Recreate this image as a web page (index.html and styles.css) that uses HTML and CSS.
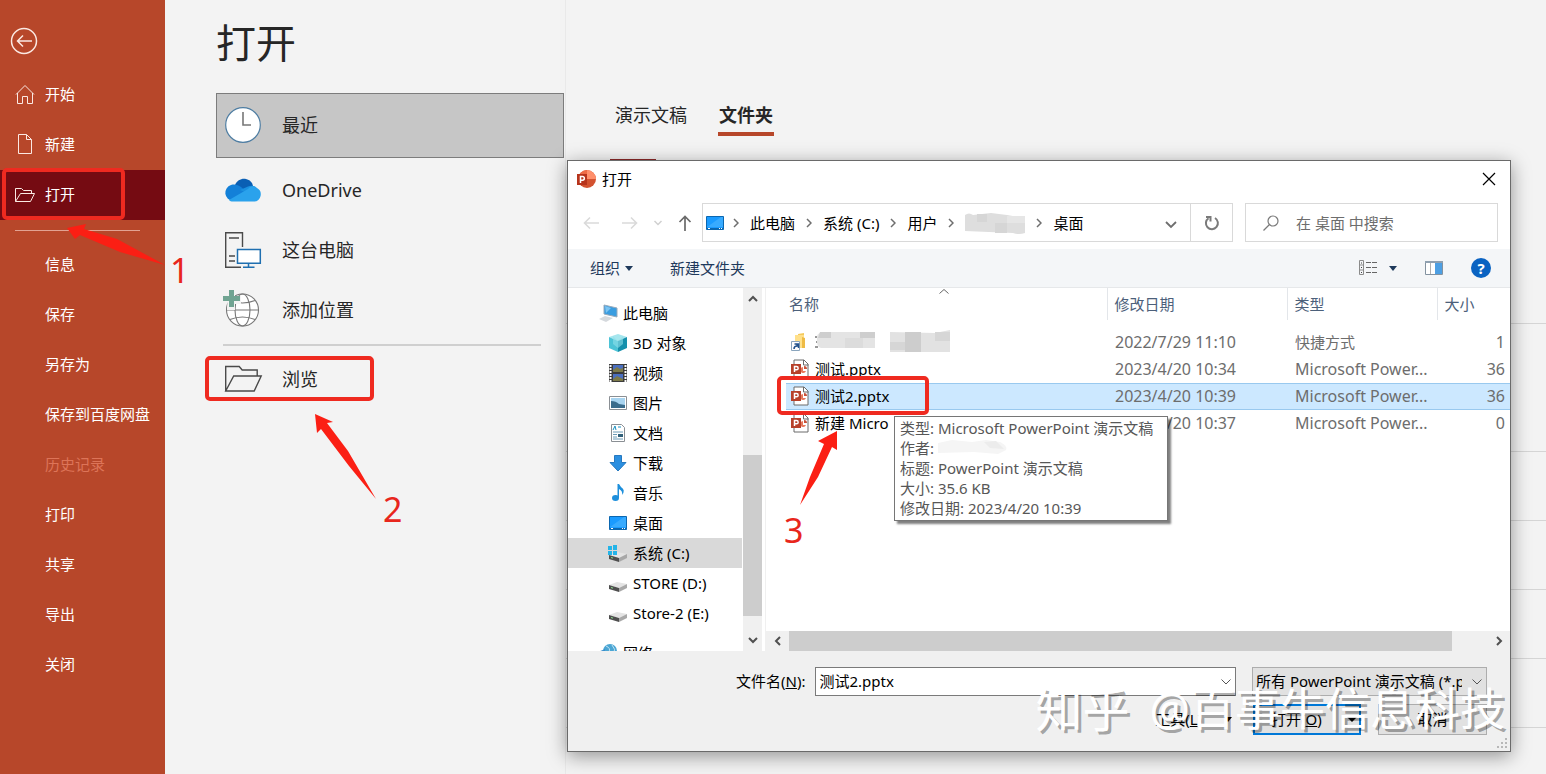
FILE: index.html
```
<!DOCTYPE html>
<html lang="zh-CN">

<head>
    <meta charset="utf-8" />
    <title>打开</title>
    <meta name="viewport" content="width=device-width, initial-scale=1" />
    <link rel="stylesheet" href="styles.css">
</head>

<body>
    <!-- shared icons -->
    <svg class="defs" width="0" height="0">
        <symbol id="ppt-file" viewBox="0 0 20 20">
            <path d="M4 1h10l4 4v14H4z" fill="#fff" stroke="#6b6b6b" />
            <path d="M13.500 1v5h5" fill="none" stroke="#6b6b6b" />
            <path d="M13 8a3 3 0 1 0 3 4h-3z" fill="#e8795c" />
            <path d="M14 7a3 3 0 0 1 3 3h-3z" fill="#c9523a" />
            <path d="M1 5h10v10H1z" fill="#b7412a" />
            <path d="M4.500 13V7.500h2a1.600 1.600 0 0 1 0 3.300h-2" fill="none" stroke="#fff" stroke-width="1.500" />
        </symbol>
        <symbol id="drive" viewBox="0 0 20 20">
            <path d="M1 12l8-3 10 2-8 4z" fill="#e4e4e4" />
            <path d="M1 12l10 3v4L1 16z" fill="#4e4e4e" />
            <path d="M11 15l8-4v4l-8 4z" fill="#a8a8a8" />
            <path d="M3 14.500l2 .6" stroke="#8de08d" />
        </symbol>
        <symbol id="screen" viewBox="0 0 20 20">
            <path d="M1.500 3.500h17v13h-17z" fill="#1a9bff" stroke="#0b67b0" />
            <path d="M2 14L16 4h2v10z" fill="#38abff" />
            <path d="M2 15.500h16" stroke="#0b67b0" />
            <path d="M3 15.500h2m9 0h1m1 0h1" stroke="#fff" />
        </symbol>
        <symbol id="chevron" viewBox="0 0 6 10">
            <path d="M1 1l4 4-4 4" fill="none" stroke="#6e6e6e" stroke-width="1.500" />
        </symbol>
    </svg>

    <nav class="sidebar">
        <button class="back" aria-label="返回">
            <svg width="28" height="28" viewBox="0 0 28 28" fill="none" stroke="#fbe9e3" stroke-width="1.500">
                <circle cx="14" cy="14" r="12.500" />
                <path d="M22 14H7.500M13 8.500L7.500 14l5.500 5.500" />
            </svg>
        </button>
        <a href="#" class="nav-item">
            <svg width="20" height="20" viewBox="0 0 20 20" fill="none" stroke="#fbe9e3">
                <path d="M1 10.500L10 1.500l9 9M2.500 9v10.500h5v-7h5v7h5V9" />
            </svg>
            开始
        </a>
        <a href="#" class="nav-item">
            <svg width="20" height="20" viewBox="0 0 20 20" fill="none" stroke="#fbe9e3">
                <path d="M3.500.5h8l5 5v14h-13zM11.500.5v5h5" />
            </svg>
            新建
        </a>
        <a href="#" class="nav-item active">
            <svg width="20" height="20" viewBox="0 0 20 20" fill="none" stroke="#fbe9e3">
                <path d="M.5 17.500v-13h6l2 2h8v3M.5 17.500l5-8h14l-4 8z" />
            </svg>
            打开
        </a>
        <hr class="nav-line">
        <a href="#" class="nav-item text">信息</a>
        <a href="#" class="nav-item text">保存</a>
        <a href="#" class="nav-item text">另存为</a>
        <a href="#" class="nav-item text">保存到百度网盘</a>
        <a href="#" class="nav-item text disabled">历史记录</a>
        <a href="#" class="nav-item text">打印</a>
        <a href="#" class="nav-item text">共享</a>
        <a href="#" class="nav-item text">导出</a>
        <a href="#" class="nav-item text">关闭</a>
    </nav>

    <main class="main">
        <section class="places">
            <h1>打开</h1>
            <button class="place selected">
                <svg width="36" height="36" viewBox="0 0 36 36">
                    <circle cx="18" cy="18" r="17.300" fill="#fff" stroke="#4f7ea3" stroke-width="1.200" />
                    <path d="M18 5v13h8" fill="none" stroke="#777" stroke-width="1.600" />
                </svg>
                最近
            </button>
            <button class="place">
                <svg width="36" height="36" viewBox="0 0 36 36">
                    <path d="M10 13C12 8 17 6 21 7c4 1 6 3 7 7l-9 6z" fill="#0a5fb4" />
                    <path d="M8 29a8.200 8.200 0 0 1-2-16c4-1 7 0 10 2l11 9-9 5z" fill="#1380d8" />
                    <path d="M15 18l8-3.500c2-1 5-1 7 0l-2 9z" fill="#1a90e0" />
                    <path d="M4 28L23 17c2-3 6-4 9-1a7.200 7.200 0 0 1-3 13.500H8c-2 0-3-.5-4-1.500z" fill="#2aa2ec" />
                </svg>
                OneDrive
            </button>
            <button class="place">
                <svg width="36" height="36" viewBox="0 0 36 36" fill="none">
                    <path d="M17.500 15V.7H.7v34.600H16M4 6h10M4 24h6M4 29h6" stroke="#4a4a4a" stroke-width="1.400" />
                    <path d="M12.500 17.500h22.800v13.800H12.500z" fill="#fff" stroke="#1f6fb0" stroke-width="1.500" />
                    <path d="M23.500 31.500v4M18 35.300h11.500" stroke="#1f6fb0" stroke-width="1.500" />
                </svg>
                这台电脑
            </button>
            <button class="place">
                <svg width="36" height="36" viewBox="0 0 36 36" fill="none">
                    <g stroke="#777" stroke-width="1.100">
                        <circle cx="17.500" cy="18" r="16" fill="#fff" />
                        <ellipse cx="17.500" cy="18" rx="7.500" ry="16" />
                        <path d="M1.500 18h32M5 8.500q12.500 5 25 0M5 27.500q12.500-5 25 0" />
                    </g>
                    <path d="M3-1h7v5h6v8h-6v6H2z" fill="#f3f3f3" />
                    <path d="M4-2h5v6h6v5H9v6H4V9h-6V4h6z" fill="#70a492" />
                </svg>
                添加位置
            </button>
            <hr class="place-line">
            <button class="place">
                <svg width="36" height="36" viewBox="0 0 36 36" fill="none" stroke="#4a4a4a" stroke-width="1.400">
                    <path d="M.7 30V5.500h13.500l3 3.500h15v6M.7 30l8-15h27.500l-7 15z" />
                </svg>
                浏览
            </button>
        </section>

        <section class="recent">
            <div class="tabs">
                <a href="#" class="tab">演示文稿</a>
                <a href="#" class="tab current">文件夹</a>
            </div>
            <ul class="folders">
                <li class="first"></li>
                <li class="group"></li>
                <li></li>
                <li></li>
                <li></li>
                <li></li>
            </ul>
        </section>
    </main>

    <div class="dialog" role="dialog" aria-label="打开">
        <header class="title-bar">
            <svg width="20" height="20" viewBox="0 0 20 20">
                <circle cx="11" cy="10" r="9" fill="#d35230" />
                <path d="M11 1a9 9 0 0 1 9 9h-9z" fill="#ff8f6b" />
                <path d="M11 1a9 9 0 0 0-9 9h9z" fill="#ed6c47" />
                <path d="M1 5h10v11H1z" fill="#b7341c" />
                <path d="M4.500 14V7.500h2a1.800 1.800 0 0 1 0 3.700h-2" fill="none" stroke="#fff" stroke-width="1.500" />
            </svg>
            <span>打开</span>
            <button class="close" aria-label="关闭">
                <svg width="12" height="12" viewBox="0 0 12 12">
                    <path d="M0 0l12 12M12 0L0 12" stroke="#000" stroke-width="1.200" />
                </svg>
            </button>
        </header>

        <div class="nav-bar">
            <div class="history">
                <button class="prev" aria-label="后退">
                    <svg width="16" height="14" viewBox="0 0 16 14" fill="none" stroke="#dadada" stroke-width="1.600">
                        <path d="M16 7H1.500M7 1.500L1.500 7 7 12.500" />
                    </svg>
                </button>
                <button aria-label="前进">
                    <svg width="16" height="14" viewBox="0 0 16 14" fill="none" stroke="#dadada" stroke-width="1.600">
                        <path d="M0 7h14.500M9 1.500L14.500 7 9 12.500" />
                    </svg>
                </button>
                <button aria-label="最近位置">
                    <svg width="8" height="6" viewBox="0 0 8 6" fill="none" stroke="#d0d0d0" stroke-width="1.500">
                        <path d="M.5 1L4 4.500 7.500 1" />
                    </svg>
                </button>
                <button aria-label="上移">
                    <svg width="14" height="16" viewBox="0 0 14 16" fill="none" stroke="#6a6a6a" stroke-width="1.700">
                        <path d="M7 16V1.500M1.500 7L7 1.500 12.500 7" />
                    </svg>
                </button>
            </div>
            <div class="address">
                <svg class="address-icon" width="20" height="20">
                    <use href="#screen" />
                </svg>
                <svg width="6" height="10"><use href="#chevron" /></svg>
                <a href="#">此电脑</a>
                <svg width="6" height="10"><use href="#chevron" /></svg>
                <a href="#">系统 (C:)</a>
                <svg width="6" height="10"><use href="#chevron" /></svg>
                <a href="#">用户</a>
                <svg width="6" height="10"><use href="#chevron" /></svg>
                <svg width="60" height="22" viewBox="0 0 60 22">
                    <path d="M0 3q4-3 8 0l18-2 16 2q10 2 18 1v17q-6 2-12 0L0 19z" fill="#dedede" />
                    <path d="M12 2h10v8H12zM30 11h12v10H30z" fill="#d6d6d6" />
                    <path d="M42 4h18v7H42z" fill="#e6e6e6" />
                </svg>
                <svg width="6" height="10"><use href="#chevron" /></svg>
                <a href="#">桌面</a>
                <button class="expand" aria-label="历史">
                    <svg width="12" height="8" viewBox="0 0 12 8" fill="none" stroke="#6e6e6e" stroke-width="1.800">
                        <path d="M1 1l5 5 5-5" />
                    </svg>
                </button>
                <button class="refresh" aria-label="刷新">
                    <svg width="16" height="16" viewBox="0 0 16 16" fill="none" stroke="#7a7a7a" stroke-width="2">
                        <path d="M11 3A6 6 0 1 1 4.500 3.200M2 2h4.500v4.500" />
                    </svg>
                </button>
            </div>
            <label class="search">
                <svg width="16" height="16" viewBox="0 0 16 16" fill="none" stroke="#7a7a7a" stroke-width="1.200">
                    <circle cx="10" cy="6" r="5" />
                    <path d="M6.500 9.500L.5 15.500" />
                </svg>
                <input type="text" placeholder="在 桌面 中搜索" aria-label="搜索">
            </label>
        </div>

        <div class="toolbar">
            <button>组织 <i class="caret"></i></button>
            <button>新建文件夹</button>
            <div class="tools">
                <button aria-label="更改视图">
                    <svg width="20" height="16" viewBox="0 0 20 16" fill="none">
                        <path d="M1.500.5h4v14h-4zM1.500 5h4M1.500 10h4" stroke="#8b8b8b" />
                        <path d="M3 3h1M3 7.500h1M3 12.500h1" stroke="#444" />
                        <path d="M8 2.500h5m1 0h5M8 7.500h5m1 0h5M8 12.500h5m1 0h5" stroke="#666" />
                    </svg>
                    <i class="caret"></i>
                </button>
                <button aria-label="预览窗格">
                    <svg width="20" height="16" viewBox="0 0 20 16">
                        <path d="M1.500 1.500h17v13h-17z" fill="#fff" stroke="#8392a0" />
                        <path d="M1 1h18v2H1z" fill="#8fa0b0" />
                        <path d="M6.500 3v11" stroke="#b0b0b0" />
                        <path d="M11 3h7v11h-7z" fill="#4d9fe3" />
                    </svg>
                </button>
                <button class="help" aria-label="帮助">?</button>
            </div>
        </div>

        <div class="body">
            <ul class="tree">
                <li class="root">
                    <svg width="20" height="20" viewBox="0 0 20 20">
                        <path d="M6 2l13 3v9L6 11z" fill="#3a9de0" stroke="#9ab" />
                        <path d="M7 3l6 2-5 5z" fill="#7cc4f2" />
                        <path d="M1 16l6-3 8 2-7 4z" fill="#d5d9dd" />
                    </svg>
                    此电脑
                </li>
                <li>
                    <svg width="20" height="20" viewBox="0 0 20 20">
                        <path d="M10 1l9 3-9 4-9-4z" fill="#a6e6ee" />
                        <path d="M1 4l9 4v11l-9-4z" fill="#4cc3d6" />
                        <path d="M19 4l-9 4v11l9-4z" fill="#1590ac" />
                        <path d="M5 3l5 5 5-5v8l-5 4-5-4z" fill="#8fe0ea" opacity=".6" />
                    </svg>
                    3D 对象
                </li>
                <li>
                    <svg width="20" height="20" viewBox="0 0 20 20">
                        <path d="M1 1h18v18H1z" fill="#3c3c3c" />
                        <path d="M2.500 2v17M17.500 2v17" stroke="#fff" stroke-width="2" stroke-dasharray="2 1" />
                        <path d="M5 2h10v7H5zM5 11h10v7H5z" fill="#4a6fc0" />
                        <path d="M5 7l4-3 3 2 3-1v4H5zM5 16l4-3 6 3v2H5z" fill="#7c7a4a" />
                    </svg>
                    视频
                </li>
                <li>
                    <svg width="20" height="20" viewBox="0 0 20 20">
                        <path d="M1.500 3.500h17v13h-17z" fill="#fff" stroke="#8a8f94" />
                        <path d="M3 5h14v10H3z" fill="#a8d4f0" />
                        <path d="M3 8q5 0 8 3l6 1v3H3z" fill="#3a6c8c" />
                    </svg>
                    图片
                </li>
                <li>
                    <svg width="20" height="20" viewBox="0 0 20 20">
                        <path d="M3.500 1.500h10l3 3v14h-13z" fill="#fff" stroke="#8a8f94" />
                        <path d="M5 7l2-4 1 4M10 4h3" fill="none" stroke="#1a8fc0" />
                        <path d="M5 9h10M5 11.500h4M5 14h4M5 16h10" stroke="#6c9cb8" />
                        <path d="M10 11h5v3h-5z" fill="#30607a" />
                    </svg>
                    文档
                </li>
                <li>
                    <svg width="20" height="20" viewBox="0 0 20 20">
                        <path d="M6.500 2.500h7v7h4.500l-8 8.500-8-8.500h4.500z" fill="#2b8fe0" stroke="#2679c0" />
                    </svg>
                    下载
                </li>
                <li>
                    <svg width="20" height="20" viewBox="0 0 20 20">
                        <ellipse cx="7.500" cy="15" rx="3.500" ry="3" fill="#1d8fdc" />
                        <path d="M9.500 1v14h1.500V6q4 2 3 6 4-5-1-8l-2-3z" fill="#1d8fdc" />
                    </svg>
                    音乐
                </li>
                <li>
                    <svg width="20" height="20"><use href="#screen" /></svg>
                    桌面
                </li>
                <li class="selected">
                    <svg width="20" height="20" viewBox="0 0 20 20">
                        <use href="#drive" />
                        <path d="M0 3h4v4H0zM5 2h4v5H5zM0 8h4v4H0zM5 8h4v4H5z" fill="#24b4e8" />
                    </svg>
                    系统 (C:)
                </li>
                <li>
                    <svg width="20" height="20"><use href="#drive" /></svg>
                    STORE (D:)
                </li>
                <li>
                    <svg width="20" height="20"><use href="#drive" /></svg>
                    Store-2 (E:)
                </li>
                <li class="root network">
                    <svg width="20" height="20" viewBox="0 0 20 20">
                        <circle cx="12" cy="8" r="7" fill="#4ba6d4" />
                        <path d="M8 3q5 2 3 6M14 2q4 4 2 9" fill="none" stroke="#bfe2f2" />
                        <path d="M0 9l7-3v8H0z" fill="#3a8fcc" />
                    </svg>
                    网络
                </li>
            </ul>
            <div class="v-scroll">
                <svg width="10" height="7" viewBox="0 0 10 7" fill="none" stroke="#505050" stroke-width="2">
                    <path d="M1 6l4-4 4 4" />
                </svg>
                <div class="v-track">
                    <div class="v-thumb"></div>
                </div>
                <svg width="10" height="7" viewBox="0 0 10 7" fill="none" stroke="#505050" stroke-width="2">
                    <path d="M1 1l4 4 4-4" />
                </svg>
            </div>
            <div class="files">
                <table>
                    <colgroup>
                        <col class="col-name">
                        <col class="col-date">
                        <col class="col-type">
                        <col class="col-size">
                    </colgroup>
                    <thead>
                        <tr>
                            <th>名称
                                <svg class="sort" width="10" height="5" viewBox="0 0 10 5" fill="none" stroke="#666">
                                    <path d="M.5 4.500L5 .5l4.500 4" />
                                </svg>
                            </th>
                            <th>修改日期</th>
                            <th>类型</th>
                            <th>大小</th>
                        </tr>
                    </thead>
                    <tbody>
                        <tr>
                            <td>
                                <div class="file">
                                    <svg width="20" height="20" viewBox="0 0 20 20">
                                        <path d="M8 2l6-1v15H8z" fill="#f5ca5c" />
                                        <path d="M5 3h9v13H5z" fill="#ffe08a" />
                                        <path d="M12 5l3 1v10h-3z" fill="#eebb45" />
                                        <path d="M1.500 9.500h8v9h-8z" fill="#fff" stroke="#8aa5bd" />
                                        <path d="M4 17q0-3 3-3v-2H4.500 8.500v4" fill="none" stroke="#24538c" stroke-width="1.500" />
                                    </svg>
                                    <svg width="136" height="22" viewBox="0 0 136 22">
                                        <path d="M0 6h2M1 11h2M0 16h3" stroke="#333" />
                                        <path d="M2 5q2-4 6-4h52v16H6q-4-1-4-6z" fill="#e4e4e4" />
                                        <path d="M5 1h11v6H3zM45 1h15v6H45z" fill="#cecece" />
                                        <path d="M30 7h18v10H30z" fill="#dcdcdc" />
                                        <path d="M75 1l45 1 15-3v22H75z" fill="#e2e2e2" />
                                        <path d="M90 1h16v10H90zM90 11h16v10H90z" fill="#cdcdcd" />
                                        <path d="M75 11h15v8H75zM120 1h15v9h-15z" fill="#d6d6d6" />
                                    </svg>
                                </div>
                            </td>
                            <td class="latin">2022/7/29 11:10</td>
                            <td>快捷方式</td>
                            <td class="latin">1</td>
                        </tr>
                        <tr>
                            <td>
                                <div class="file"><svg width="20" height="20"><use href="#ppt-file" /></svg>测试.pptx</div>
                            </td>
                            <td class="latin">2023/4/20 10:34</td>
                            <td class="latin">Microsoft Power...</td>
                            <td class="latin">36</td>
                        </tr>
                        <tr class="selected">
                            <td>
                                <div class="file"><svg width="20" height="20"><use href="#ppt-file" /></svg>测试2.pptx</div>
                            </td>
                            <td class="latin">2023/4/20 10:39</td>
                            <td class="latin">Microsoft Power...</td>
                            <td class="latin">36</td>
                        </tr>
                        <tr>
                            <td>
                                <div class="file"><svg width="20" height="20"><use href="#ppt-file" /></svg>新建 Micro</div>
                            </td>
                            <td class="latin">2023/4/20 10:37</td>
                            <td class="latin">Microsoft Power...</td>
                            <td class="latin">0</td>
                        </tr>
                    </tbody>
                </table>
                <div class="h-scroll">
                    <svg width="7" height="10" viewBox="0 0 7 10" fill="none" stroke="#505050" stroke-width="2">
                        <path d="M6 1L2 5l4 4" />
                    </svg>
                    <div class="h-track">
                        <div class="h-thumb"></div>
                    </div>
                    <svg width="7" height="10" viewBox="0 0 7 10" fill="none" stroke="#505050" stroke-width="2">
                        <path d="M1 1l4 4-4 4" />
                    </svg>
                </div>
            </div>
        </div>

        <footer class="footer">
            <div class="footer-row">
                <label for="filename">文件名(<u>N</u>):</label>
                <div class="combo">
                    <input type="text" id="filename" value="测试2.pptx">
                    <svg width="10" height="6" viewBox="0 0 10 6" fill="none" stroke="#555">
                        <path d="M.5.5L5 5 9.500.5" />
                    </svg>
                </div>
                <div class="combo filter">
                    <select aria-label="文件类型">
                        <option>所有 PowerPoint 演示文稿 (*.pptx)</option>
                    </select>
                    <svg width="10" height="6" viewBox="0 0 10 6" fill="none" stroke="#555">
                        <path d="M.5.5L5 5 9.500.5" />
                    </svg>
                </div>
            </div>
            <div class="footer-row actions">
                <button class="tool-menu">工具(<u>L</u>) <i class="caret"></i></button>
                <button class="open">
                    <span>打开(<u>O</u>)</span>
                    <i class="caret"></i>
                </button>
                <button class="cancel">取消</button>
            </div>
            <svg class="grip" width="12" height="12" viewBox="0 0 12 12" fill="#b8b8b8">
                <path d="M9 0h2v2H9zM9 4h2v2H9zM5 4h2v2H5zM9 8h2v2H9zM5 8h2v2H5zM1 8h2v2H1z" />
            </svg>
        </footer>

        <div class="tooltip" role="tooltip">
            <div>类型: Microsoft PowerPoint 演示文稿</div>
            <div>作者:
                <svg width="70" height="14" viewBox="0 0 70 14">
                    <path d="M0 3l14-3 20 2 14-2 14 2q8 4 6 8l-8 4-24-2-36 1z" fill="#f5f5f5" />
                    <path d="M46 2l12-1 8 8-14-1z" fill="#ececec" />
                </svg>
            </div>
            <div>标题: PowerPoint 演示文稿</div>
            <div>大小: 35.6 KB</div>
            <div>修改日期: 2023/4/20 10:39</div>
        </div>
    </div>

    <!-- step marks drawn over the windows -->
    <div class="mark mark-open"></div>
    <div class="mark mark-browse"></div>
    <div class="mark mark-file"></div>
    <svg class="arrows" width="900" height="540" viewBox="0 0 900 540" fill="#fb1f14">
        <path d="M67 228l19-4-2 5 33 10 48 26-45-13-40-17-5 4z" />
        <path d="M315 414l18 8-6 1 21 28 28 48-27-33-28-37-4 4z" />
        <path d="M837 431l0 19-5-3-14 30-18 28 10-28 14-33-6-3z" />
    </svg>
    <span class="step step-1">1</span>
    <span class="step step-2">2</span>
    <span class="step step-3">3</span>
    <div class="watermark">
        <span class="site">知乎</span>
        <span>@百事牛信息科技</span>
    </div>
</body>

</html>
```
FILE: styles.css
```
* {
    box-sizing: border-box;
}

body {
    position: relative;
    display: flex;
    min-height: 100vh;
    margin: 0;
    overflow: hidden;
    background: #f3f3f3;
    color: #262626;
    font-family: "Noto Sans", "Noto Sans CJK SC", sans-serif;
    font-size: 15px;
    line-height: 20px;
}

button {
    padding: 0;
    border: 0;
    background: none;
    color: inherit;
    font: inherit;
}

a {
    color: inherit;
    text-decoration: none;
}

ul {
    margin: 0;
    padding: 0;
    list-style: none;
}

svg {
    flex: none;
    overflow: visible;
}

.defs {
    position: absolute;
}

.caret {
    display: inline-block;
    border: 4px solid transparent;
    border-top: 5px solid #1e395b;
    border-bottom: 0;
}

/* Sidebar */
.sidebar {
    flex: none;
    width: 165px;
    padding-top: 27px;
    background: #b7472a;
    color: #fff;
}

.back {
    display: block;
    height: 28px;
    margin: 0 0 15px 10px;
}

.nav-item {
    display: flex;
    align-items: center;
    gap: 10px;
    height: 50px;
    padding: 0 0 2px 15px;
}

.nav-item.text {
    padding-left: 45px;
}

.nav-item.active {
    background: #750b12;
}

.nav-item.disabled {
    color: #dd7458;
}

.nav-line {
    height: 1px;
    margin: 10px 25px 9px 15px;
    border: 0;
    background: #e2a292;
}

/* Open page */
.main {
    display: flex;
    flex: 1;
}

.places {
    flex: none;
    width: 401px;
    padding: 15px 1px 0 51px;
    border-right: 1px solid #e9e9e9;
}

.places h1 {
    margin: 0 0 22px;
    font-size: 40px;
    font-weight: normal;
    line-height: 56px;
}

.place {
    display: flex;
    align-items: center;
    gap: 21px;
    width: 100%;
    height: 60px;
    padding-left: 9px;
    font-size: 18px;
}

.place.selected {
    height: 65px;
    margin-bottom: 2px;
    padding: 0 0 2px 8px;
    border: 1px solid #7c7c7c;
    background: #c6c6c6;
}

.place-line {
    height: 2px;
    margin: 4px 23px 3px 7px;
    border: 0;
    background: #cfcfcf;
}

.recent {
    flex: 1;
    height: 774px;
    padding-top: 98px;
    overflow: hidden;
}

.tabs {
    display: flex;
    gap: 30px;
    padding-left: 48px;
    font-size: 18px;
}

.tab {
    padding: 0 1px;
    border-bottom: 4px solid transparent;
    line-height: 34px;
}

.tab.current {
    border-color: #b7472a;
    font-weight: bold;
}

.folders li {
    height: 69px;
    border-bottom: 1px solid #d5d5d5;
}

.folders .first {
    height: 188px;
    padding: 23px 0 0 44px;
}

.folders .first::before {
    display: block;
    width: 46px;
    height: 8px;
    background: #8c2a2a;
    content: "";
}

.folders .group {
    height: 128px;
}

/* File dialog */
.dialog {
    position: absolute;
    top: 160px;
    right: 35px;
    left: 567px;
    border: 1px solid #6a6a6a;
    background: #fff;
    box-shadow: 0 4px 18px rgba(0, 0, 0, .4);
    color: #000;
}

.title-bar {
    display: flex;
    align-items: center;
    gap: 6px;
    height: 38px;
    padding: 0 15px 2px 8px;
}

.close {
    margin-left: auto;
}

.nav-bar {
    display: flex;
    gap: 12px;
    height: 50px;
    padding: 4px 12px 7px 0;
}

.history {
    display: flex;
    flex: none;
    align-items: center;
    gap: 16px;
    width: 122px;
    padding-left: 15px;
}

.history button {
    display: flex;
}

.history .prev {
    margin-right: 7px;
}

.address {
    display: flex;
    flex: 1;
    align-items: center;
    gap: 11px;
    border: 1px solid #d9d9d9;
    padding-left: 2px;
}

.address-icon {
    margin-right: -3px;
}

.expand {
    margin-left: auto;
    padding-right: 2px;
}

.refresh {
    display: flex;
    align-items: center;
    justify-content: center;
    align-self: stretch;
    width: 42px;
    border-left: 1px solid #d9d9d9;
}

.search {
    display: flex;
    flex: none;
    align-items: center;
    gap: 17px;
    width: 253px;
    padding-left: 17px;
    border: 1px solid #d9d9d9;
}

.search input {
    flex: 1;
    min-width: 0;
    border: 0;
    padding: 0;
    font: inherit;
}

.search input::placeholder {
    color: #6d6d6d;
}

.toolbar {
    display: flex;
    align-items: center;
    gap: 37px;
    height: 39px;
    padding: 0 19px 0 22px;
    border-bottom: 1px solid #e6e8ea;
    background: #f4f6f8;
    color: #1e395b;
}

.toolbar .caret {
    margin-left: 1px;
    vertical-align: 3px;
}

.tools {
    display: flex;
    align-items: center;
    gap: 27px;
    margin-left: auto;
}

.tools button {
    display: flex;
    align-items: center;
    gap: 10px;
}

.tools .help {
    justify-content: center;
    width: 20px;
    height: 20px;
    border-radius: 50%;
    background: #0a63c2;
    color: #fff;
    font-weight: bold;
}

.body {
    display: flex;
    height: 363px;
}

.tree {
    flex: none;
    width: 175px;
    padding: 10px 1px 0 0;
    overflow: hidden;
}

.tree li {
    display: flex;
    align-items: center;
    gap: 5px;
    height: 30px;
    padding-left: 40px;
}

.tree .root {
    padding-left: 30px;
}

.tree .selected {
    background: #d9d9d9;
}

.tree .network {
    margin-top: 10px;
}

.v-scroll {
    display: flex;
    flex: none;
    flex-direction: column;
    align-items: center;
    width: 19px;
    padding: 7px 0;
    background: #f0f0f0;
}

.v-track {
    display: flex;
    flex: 1;
    flex-direction: column;
    justify-content: flex-end;
    width: 100%;
    padding: 5px 0 21px;
}

.v-thumb {
    height: 161px;
    background: #cdcdcd;
}

.files {
    display: flex;
    flex: 1;
    flex-direction: column;
    justify-content: space-between;
    min-width: 0;
    margin-left: 3px;
    border-left: 1px solid #f0f0f0;
}

.files table {
    width: calc(100% - 20px);
    margin-left: 20px;
    border-collapse: collapse;
    table-layout: fixed;
}

.col-name {
    width: 321px;
}

.col-date {
    width: 180px;
}

.col-type {
    width: 150px;
}

.files th {
    position: relative;
    height: 32px;
    padding: 0 0 0 7px;
    border-left: 1px solid #e3e6ea;
    color: #4c607a;
    font-weight: normal;
    text-align: left;
}

.files th:first-child {
    padding-left: 3px;
    border-left: 0;
}

.sort {
    position: absolute;
    top: 1px;
    right: 158px;
}

.files tbody::before {
    display: block;
    height: 9px;
    content: "";
}

.files td {
    height: 27px;
    padding: 0 0 2px 8px;
    color: #6d6d6d;
}

.files td:first-child {
    padding-left: 4px;
    color: #000;
}

.files td:last-child {
    padding-right: 5px;
    text-align: right;
}

.files .latin {
    font-size: 16px;
}

.files tr.selected {
    background: #cce8ff;
    box-shadow: inset 0 1px #99c9ef, inset 0 -1px #99c9ef;
}

.file {
    display: flex;
    align-items: center;
    gap: 5px;
    height: 20px;
}

.h-scroll {
    display: flex;
    align-items: center;
    justify-content: space-between;
    height: 20px;
    padding: 0 7px 0 8px;
    background: #f0f0f0;
}

.h-track {
    flex: 1;
    padding: 0 44px 0 8px;
}

.h-thumb {
    height: 20px;
    background: #cdcdcd;
}

.footer {
    position: relative;
    display: flex;
    flex-direction: column;
    gap: 8px;
    padding: 16px 23px 16px 168px;
    background: #f0f0f0;
}

.footer-row {
    display: flex;
    align-items: center;
}

.footer-row label {
    padding-bottom: 2px;
}

.combo {
    position: relative;
    flex: 1;
    margin-left: 10px;
}

.combo.filter {
    flex: none;
    width: 235px;
    margin-left: 16px;
}

.combo input,
.combo select {
    display: block;
    width: 100%;
    height: 29px;
    padding: 0 24px 2px 3px;
    border: 1px solid #7a7a7a;
    border-radius: 0;
    appearance: none;
    background: #fff;
    color: #000;
    font: inherit;
}

.combo select {
    border-color: #adadad;
    background: #e1e1e1;
}

.combo svg {
    position: absolute;
    top: 12px;
    right: 5px;
}

.actions {
    justify-content: flex-end;
    gap: 17px;
    height: 31px;
}

.footer .caret {
    border-top-color: #000;
}

.tool-menu {
    margin-right: 4px;
    padding-bottom: 2px;
}

.tool-menu .caret {
    margin-left: 18px;
    vertical-align: 3px;
}

.open {
    display: flex;
    align-items: center;
    justify-content: space-between;
    width: 108px;
    height: 31px;
    padding: 0 1px 2px 16px;
    border: 2px solid #0078d7;
    background: #e1e1e1;
}

.open .caret {
    border-width: 6px 6px 0;
}

.cancel {
    width: 109px;
    height: 31px;
    padding-bottom: 2px;
    border: 1px solid #adadad;
    background: #e1e1e1;
}

.grip {
    position: absolute;
    right: 2px;
    bottom: 1px;
}

.tooltip {
    position: absolute;
    top: 255px;
    left: 326px;
    width: 274px;
    padding: 1px 4px 2px 5px;
    border: 1px solid #767676;
    background: #fff;
    box-shadow: 3px 3px 2px rgba(0, 0, 0, .5);
    color: #575757;
    white-space: nowrap;
}

/* Step marks */
.mark {
    position: absolute;
    border: 4px solid #ef2a20;
    border-radius: 5px;
}

.mark-open {
    top: 168px;
    left: 2px;
    width: 123px;
    height: 52px;
}

.mark-browse {
    top: 356px;
    left: 205px;
    width: 169px;
    height: 45px;
}

.mark-file {
    top: 376px;
    left: 777px;
    width: 152px;
    height: 39px;
}

.arrows {
    position: absolute;
    top: 0;
    left: 0;
}

.step {
    position: absolute;
    color: #e8261c;
    font-size: 34px;
    line-height: 40px;
}

.step-1 {
    top: 250px;
    left: 170px;
}

.step-2 {
    top: 489px;
    left: 383px;
}

.step-3 {
    top: 510px;
    left: 784px;
}

.watermark {
    position: absolute;
    top: 681px;
    right: 41px;
    display: flex;
    gap: 20px;
    color: #fff;
    font-size: 45px;
    line-height: 56px;
    text-shadow: 3px 3px 0 rgba(0, 0, 0, .32);
    white-space: nowrap;
}

.site {
    font-size: 47px;
}
```
